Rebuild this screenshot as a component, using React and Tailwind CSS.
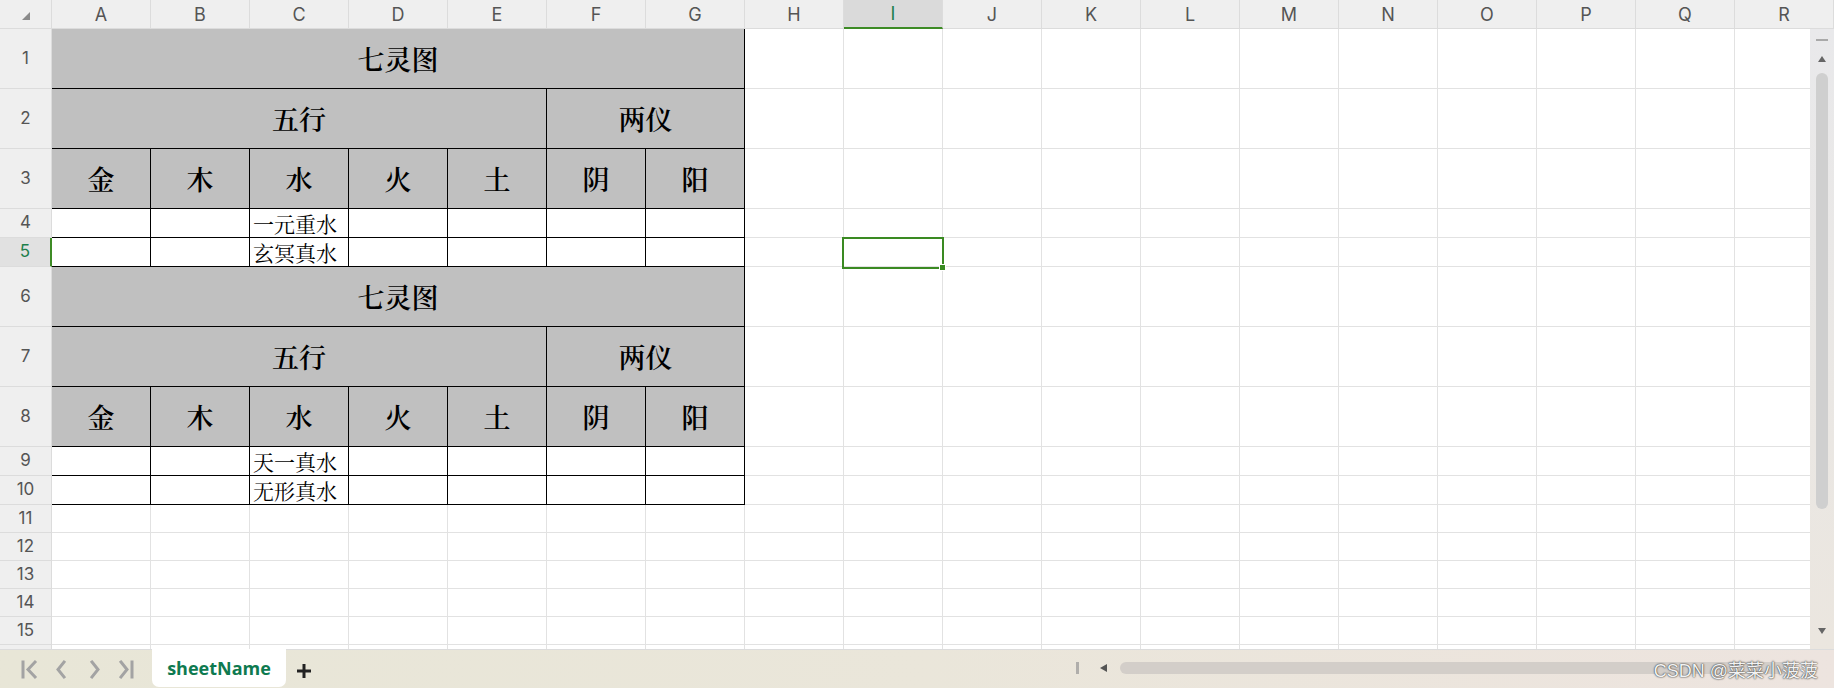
import React from "react";

const COLS = "ABCDEFGHIJKLMNOPQR".split("");
const SPAN = { 1: "", 2: "col-span-2", 5: "col-span-5", 7: "col-span-7" };

// table block: rows 1-10, columns A-G
const block = (a, b) => [
  [{ span: 7, text: "七灵图", head: true }],
  [
    { span: 5, text: "五行", head: true },
    { span: 2, text: "两仪", head: true },
  ],
  ["金", "木", "水", "火", "土", "阴", "阳"].map((t) => ({ span: 1, text: t, head: true })),
  [0, 1, 2, 3, 4, 5, 6].map((i) => ({ span: 1, text: i === 2 ? a : "" })),
  [0, 1, 2, 3, 4, 5, 6].map((i) => ({ span: 1, text: i === 2 ? b : "" })),
];
const TABLE = [...block("一元重水", "玄冥真水"), ...block("天一真水", "无形真水")];

function RowHead({ n }) {
  const active = n === 5;
  return (
    <div
      className={
        active
          ? "flex items-center justify-center bg-[#e1e1e1] border-b border-[#dcdcdc] border-r-2 border-r-[#3d8b25] text-[17px] text-[#1d7f4c]"
          : "flex items-center justify-center bg-[#efefef] border-r border-b border-[#dcdcdc] text-[17px] text-[#555]"
      }
    >
      {n < 16 ? n : ""}
    </div>
  );
}

function Cell({ selected }) {
  return (
    <div className="relative border-r border-b border-[#e2e2e2] bg-white">
      {selected && (
        <div className="absolute -left-[2px] -top-[1px] w-[102px] h-[32px] border-2 border-[#3a8a22] z-10">
          <div className="absolute -right-[4px] -bottom-[4px] w-[7px] h-[7px] bg-[#3a8a22] border border-white" />
        </div>
      )}
    </div>
  );
}

function TableCell({ c }) {
  if (c.head)
    return (
      <div
        className={`${SPAN[c.span]} flex items-center justify-center pt-[6px] border-r border-b border-black bg-[#c0c0c0] font-semibold text-[27px] text-black font-['Liberation_Serif','Noto_Serif_CJK_SC','Noto_Sans_CJK_SC',serif]`}
      >
        {c.text}
      </div>
    );
  return (
    <div className="flex items-center pl-[3px] pt-[5px] border-r border-b border-black bg-white text-[21px] leading-none text-black font-['Liberation_Serif','Noto_Serif_CJK_SC','Noto_Sans_CJK_SC',serif]">
      {c.text}
    </div>
  );
}

function Sheet() {
  const cells = [];
  // corner
  cells.push(
    <div key="corner" className="flex items-center justify-center bg-[#efefef] border-r border-b border-[#dcdcdc]">
      <svg width="10" height="10" viewBox="0 0 10 10" className="mt-[3px]">
        <polygon points="9,1 9,9 1,9" fill="#8a8a8a" />
      </svg>
    </div>
  );
  COLS.forEach((c) =>
    cells.push(
      <div
        key={"h" + c}
        className={
          c === "I"
            ? "flex items-center justify-center bg-[#dadada] border-r border-[#dcdcdc] border-b-2 border-b-[#3d8b25] text-[18px] text-[#1d7f4c]"
            : "flex items-center justify-center bg-[#efefef] border-r border-b border-[#dcdcdc] text-[18px] text-[#555]"
        }
      >
        {c}
      </div>
    )
  );
  for (let r = 1; r <= 16; r++) {
    cells.push(<RowHead key={"r" + r} n={r} />);
    let start = 0;
    if (r <= 10) {
      TABLE[r - 1].forEach((c, i) => cells.push(<TableCell key={`t${r}-${i}`} c={c} />));
      start = 7;
    }
    for (let i = start; i < COLS.length; i++) {
      cells.push(<Cell key={`c${r}-${i}`} selected={r === 5 && COLS[i] === "I"} />);
    }
  }
  return (
    <div className="grid w-[1834px] grid-cols-[52px_repeat(18,99px)] grid-rows-[29px_60px_60px_60px_29px_29px_60px_60px_60px_29px_29px_28px_28px_28px_28px_28px_28px] font-['Inter','Open_Sans',sans-serif]">
      {cells}
    </div>
  );
}

function VScroll() {
  return (
    <div className="absolute right-0 top-[29px] w-[24px] h-[620px] bg-linear-to-b from-[#e9e9eb] to-[#ebe6df] flex flex-col items-center">
      <div className="mt-[10px] w-[12px] h-[2px] bg-[#a9a9a9]" />
      <svg width="10" height="8" viewBox="0 0 10 8" className="mt-[14px]">
        <polygon points="5,1 9,7 1,7" fill="#666" />
      </svg>
      <div className="mt-[10px] w-[12px] h-[436px] rounded-full bg-[#cfcfcf]" />
      <svg width="10" height="8" viewBox="0 0 10 8" className="mt-auto mb-[14px]">
        <polygon points="1,1 9,1 5,7" fill="#666" />
      </svg>
    </div>
  );
}

function TabBar() {
  return (
    <div className="relative h-[39px] flex items-start border-t border-[#dcdcdc] bg-linear-to-r from-[#e8e6d7] via-[#eae6da] to-[#ede4df]">
      <svg width="140" height="38" viewBox="0 0 140 38" className="shrink-0">
        <g stroke="#a3a3a3" strokeWidth="3" fill="none" strokeLinecap="square">
          <line x1="23" y1="12" x2="23" y2="27" />
          <polyline points="35,12 28,19.5 35,27" />
          <polyline points="64,12 58,19.5 64,27" />
          <polyline points="92,12 98,19.5 92,27" />
          <polyline points="121,12 127,19.5 121,27" />
          <line x1="132" y1="12" x2="132" y2="27" />
        </g>
      </svg>
      <div className="ml-[12px] -mt-[1px] w-[134px] h-[38px] bg-white rounded-b-[7px] flex items-center justify-center text-[18px] font-bold text-[#0e7a50] font-['Open_Sans',sans-serif]">
        sheetName
      </div>
      <svg width="16" height="16" viewBox="0 0 16 16" className="ml-[10px] mt-[13px]">
        <g stroke="#222" strokeWidth="3">
          <line x1="8" y1="1" x2="8" y2="15" />
          <line x1="1" y1="8" x2="15" y2="8" />
        </g>
      </svg>
      <div className="flex-1" />
      <div className="w-[764px] h-full flex items-center pl-[6px] pb-[2px]">
        <div className="w-[3px] h-[12px] bg-[#b0aeab]" />
        <svg width="9" height="10" viewBox="0 0 9 10" className="ml-[20px]">
          <polygon points="1,5 8,1 8,9" fill="#555" />
        </svg>
        <div className="ml-[12px] w-[672px] h-[12px] rounded-full bg-[#d3cec9]" />
      </div>
      <div className="absolute right-[16px] bottom-[8px] text-[18px] leading-none text-[#f2f2f2] font-['Liberation_Sans','Noto_Sans_CJK_SC',sans-serif] [text-shadow:0_0_2px_#3a3a3a,0_0_1px_#3a3a3a]">
        CSDN @菜菜小菠菠
      </div>
    </div>
  );
}

export default function App() {
  return (
    <div className="w-[1834px] h-[688px] overflow-hidden bg-white flex flex-col">
      <div className="relative h-[649px] overflow-hidden">
        <Sheet />
        <VScroll />
      </div>
      <TabBar />
    </div>
  );
}
